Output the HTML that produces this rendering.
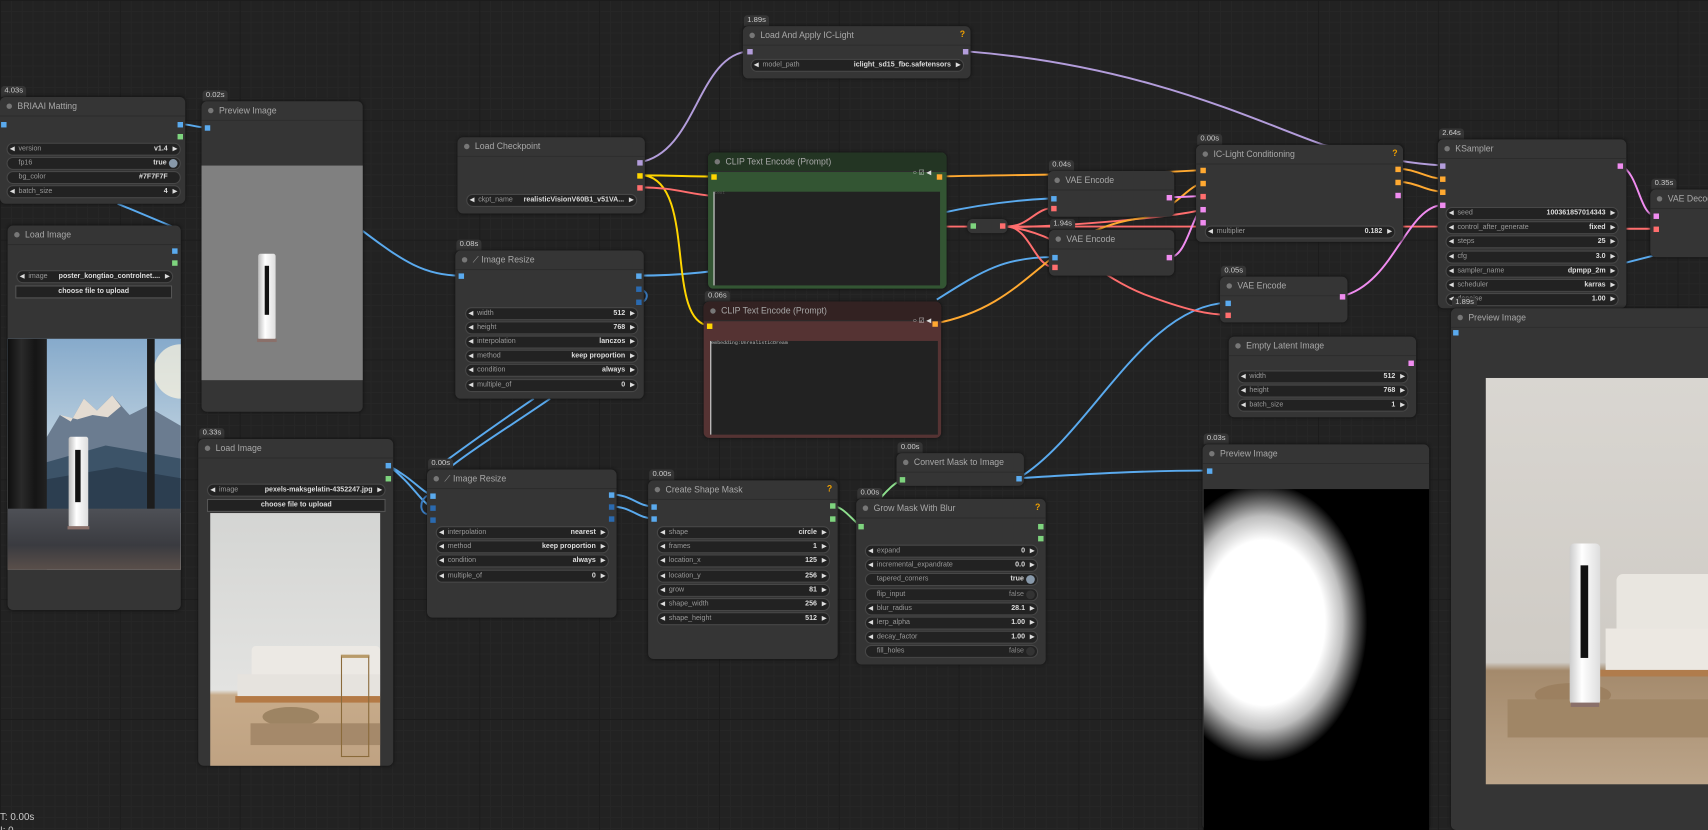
<!DOCTYPE html>
<html><head><meta charset="utf-8">
<style>
html,body{margin:0;padding:0;width:1708px;height:830px;overflow:hidden;background:#222;}
#w{position:absolute;left:0;top:0;width:1568px;height:762px;transform:scale(1.08929);transform-origin:0 0;overflow:hidden;
background-color:#222;
background-image:linear-gradient(#1c1c1c 1px,transparent 1px),linear-gradient(90deg,#1c1c1c 1px,transparent 1px),linear-gradient(#262626 1px,transparent 1px),linear-gradient(90deg,#262626 1px,transparent 1px);
background-size:110px 110px,110px 110px,10px 10px,10px 10px;
font-family:"Liberation Sans",Arial,sans-serif;}
.n{position:absolute;background:#353535;border-radius:5px;box-shadow:0 0 3px #111;}
.t{position:absolute;left:0;right:0;top:0;height:17px;border-bottom:1px solid #2c2c2c;color:#a8a8a8;font-size:8px;line-height:17px;padding-left:16px;white-space:nowrap;overflow:hidden;border-radius:5px 5px 0 0}
.t:before{content:"";position:absolute;left:6px;top:6px;width:5px;height:5px;border-radius:50%;background:#777}
.tm{position:absolute;background:#353535;color:#ccc;font-size:7px;padding:1px 3px;border-radius:3px 3px 0 0;height:8px;line-height:8px}
.wd{position:absolute;height:10px;background:#222;border:1px solid #474747;border-radius:6px;font-size:6.5px;line-height:10px;color:#999;white-space:nowrap;overflow:hidden}
.wd .l{position:absolute;left:10px}
.wd .v{position:absolute;right:11px;color:#ddd;font-weight:bold}
.wd .a1{position:absolute;left:2px;color:#ddd;font-size:6px}
.wd .a2{position:absolute;right:2px;color:#ddd;font-size:6px}
.s{position:absolute;width:5px;height:5px}
.q{position:absolute;color:#f0a000;font-size:8px;font-weight:bold}
svg{position:absolute;left:0;top:0}
.btn{position:absolute;height:10px;background:#222;border:1px solid #555;color:#ddd;font-size:6.5px;line-height:10px;text-align:center;font-weight:bold}
</style></head><body><div id="w">
<svg width="1568" height="762" fill="none" stroke-width="1.8">
<g stroke="#5aaaee">
<path d="M165 114 C175 114 180 117 190 117"/>
<path d="M108 187 L163 210"/>
<path d="M333 212 C370 240 390 253 423 253"/>
<path d="M586 253 C750 253 800 190 967 182"/>
<path d="M860 275 C900 250 920 236 967 236"/>
<path d="M356 427 C380 440 385 450 397 455"/>
<path d="M356 427 C380 445 385 460 397 466"/>
<path d="M505 366 C470 390 430 415 412 430"/>
<path d="M490 366 C455 390 420 415 400 430"/>
<path d="M561 454 C580 454 585 465 600 465"/>
<path d="M561 465 C580 465 585 476 600 476"/>
<path d="M935 439 C1000 435 1050 432 1110 432"/>
<path d="M935 439 C1000 400 1050 280 1127 278"/>
<path d="M1493 241 L1568 222"/>
</g>
<g stroke="#3a7bc0"><path d="M586 265 C600 268 592 280 586 277"/><path d="M392 455 C385 460 385 470 392 472"/></g>
<g stroke="#b39ddb"><path d="M587 149 C640 140 640 50 688 47"/><path d="M886 47 C1050 60 1150 110 1215 133 C1270 145 1290 150 1325 152"/></g>
<g stroke="#ffd500"><path d="M587 161 C620 161 630 162 655 162"/><path d="M592 161 C640 170 610 295 651 299"/></g>
<g stroke="#ff6e6e"><path d="M587 172 C620 172 630 178 655 180"/><path d="M862 208 L892 208"/><path d="M924 208 C945 208 950 191 967 191"/><path d="M924 208 C945 208 950 245 967 245"/><path d="M924 208 L1320 208"/><path d="M924 208 C980 215 1000 250 1050 270 C1090 285 1110 289 1127 289"/><path d="M1493 210 L1520 210"/><path d="M924 208 C950 210 1080 200 1105 192"/></g>
<g stroke="#ffa931"><path d="M862 162 C950 160 1050 160 1105 156"/><path d="M858 297 C950 280 960 210 1050 200 C1080 192 1090 170 1105 168"/><path d="M1284 155 C1300 155 1310 164 1325 164"/><path d="M1284 167 C1300 167 1310 176 1325 176"/></g>
<g stroke="#f08cf0"><path d="M1074 181 C1090 181 1095 180 1105 180"/><path d="M1074 236 C1090 236 1095 192 1105 192"/><path d="M1232 272 C1280 260 1290 190 1325 188"/><path d="M1488 152 C1505 160 1505 198 1520 198"/></g>
<g stroke="#8ee08e"><path d="M828 440 C810 450 800 470 790 483"/><path d="M764 464 C775 466 780 475 790 483"/></g>
</svg>
<div id="nodes"></div>
<div style="position:absolute;left:0;top:745px;color:#ccc;font-size:9px">T: 0.00s</div>
<div style="position:absolute;left:0;top:757px;color:#ccc;font-size:9px">I: 0</div>
</div>
<script>
var H='';
function N(x,y,w,h,title,tm,o){o=o||{};
 if(tm)H+='<div class="tm" style="left:'+(x+1)+'px;top:'+(y-10)+'px">'+tm+'</div>';
 H+='<div class="n" style="left:'+x+'px;top:'+y+'px;width:'+w+'px;height:'+h+'px;'+(o.bg?'background:'+o.bg:'')+'"><div class="t" style="'+(o.tb?'background:'+o.tb:'')+'">'+title+'</div>'+(o.q?'<div class="q" style="right:5px;top:3px">?</div>':'')+'</div>';}
function W(x,y,w,l,v,ar){ar=ar!==false;
 H+='<div class="wd" style="left:'+x+'px;top:'+y+'px;width:'+w+'px">'+(ar?'<span class="a1">◀</span>':'')+'<span class="l">'+l+'</span><span class="v">'+v+'</span>'+(ar?'<span class="a2">▶</span>':'')+'</div>';}
function T(x,y,w,l,v,on){H+='<div class="wd" style="left:'+x+'px;top:'+y+'px;width:'+w+'px"><span class="l">'+l+'</span><span class="v" style="right:12px;'+(on?'':'color:#888;font-weight:normal')+'">'+v+'</span><span style="position:absolute;right:2px;top:1px;width:8px;height:8px;border-radius:50%;background:'+(on?'#8899aa':'#333')+'"></span></div>';}
function S(x,y,c){H+='<div class="s" style="left:'+(x-2.5)+'px;top:'+(y-2.5)+'px;background:'+c+'"></div>';}
function R(html){H+=html;}
var B='#5aaaee',G='#7ed47e',P='#b39ddb',Y='#ffd500',RD='#ff6e6e',O='#ffa931',PK='#f08cf0',DB='#2a6ab0';
N(0,89,170,98,'BRIAAI Matting','4.03s');S(3,114,B);S(165,114,B);S(165,125,G);
W(6,131,158,'version','v1.4');T(6,144,158,'fp16','true',1);W(6,157,158,'bg_color','#7F7F7F',false);W(6,170,158,'batch_size','4');
N(185,93,148,285,'Preview Image','0.02s');S(190,117,B);
R('<div style="position:absolute;left:185px;top:152px;width:148px;height:197px;background:#808080"></div><div style="position:absolute;left:237px;top:233px;width:16px;height:79px;background:linear-gradient(90deg,#bbb,#fff 40%,#ddd);border-radius:2px"></div><div style="position:absolute;left:243px;top:244px;width:4px;height:45px;background:#111"></div><div style="position:absolute;left:236px;top:311px;width:18px;height:3px;background:#8a706a"></div>');
N(7,207,159,353,'Load Image');S(160,230,B);S(160,241,G);
W(15,248,142,'image','poster_kongtiao_controlnet....');R('<div class="btn" style="left:14px;top:262px;width:142px">choose file to upload</div>');
R('<div style="position:absolute;left:7px;top:311px;width:159px;height:212px;overflow:hidden;background:linear-gradient(#86aacb,#b5cbdc 40%,#d8dde0 50%)">'+
'<svg width="159" height="212" style="position:absolute;left:0;top:0"><circle cx="159" cy="30" r="25" fill="#fff6e0" opacity=".7"/><polygon points="30,100 48,70 58,76 70,55 82,66 96,52 112,70 128,62 159,80 159,140 30,140" fill="#6b7c90"/><polygon points="48,70 58,76 70,55 82,66 96,52 104,62 92,72 78,70 64,74" fill="#e4dcd2"/><polygon points="30,115 90,98 159,110 159,160 30,160" fill="#3c5368"/><polygon points="30,130 100,118 159,128 159,160 30,160" fill="#2c3e50"/></svg>'+
'<div style="position:absolute;left:0;top:0;width:36px;height:212px;background:linear-gradient(90deg,#0e0e0e,#2a2a2a,#151515 70%,#222)"></div>'+
'<div style="position:absolute;left:128px;top:0;width:7px;height:160px;background:#1d1d1d"></div>'+
'<div style="position:absolute;left:0;top:156px;width:159px;height:56px;background:linear-gradient(#4e5056,#3a3b40 60%,#5a4f4a)"></div>'+
'<div style="position:absolute;left:56px;top:90px;width:18px;height:83px;background:linear-gradient(90deg,#bbb,#fff 40%,#ddd);border-radius:2px"></div><div style="position:absolute;left:62px;top:102px;width:5px;height:48px;background:#111"></div><div style="position:absolute;left:55px;top:172px;width:20px;height:3px;background:#8a706a"></div></div>');
N(420,126,172,70,'Load Checkpoint');S(587,149,P);S(587,161,Y);S(587,172,RD);W(428,178,155,'ckpt_name','realisticVisionV60B1_v51VA...');
N(418,230,173,136,'⟋ Image Resize','0.08s');S(423,253,B);S(586,253,B);S(586,265,DB);S(586,277,DB);
[['width','512'],['height','768'],['interpolation','lanczos'],['method','keep proportion'],['condition','always'],['multiple_of','0']].forEach(function(a,i){W(427,282+i*13.1,157,a[0],a[1]);});
N(682,24,209,48,'Load And Apply IC-Light','1.89s',{q:1});S(688,47,P);S(886,47,P);W(689,54,194,'model_path','iclight_sd15_fbc.safetensors');
N(650,140,219,125,'CLIP Text Encode (Prompt)','',{bg:'#335533',tb:'#233523'});S(655,162,Y);S(862,162,O);
R('<div style="position:absolute;left:655px;top:176px;width:207px;height:86px;background:#222;border-left:1px solid #ddd;color:#555;font-size:4px;font-family:Liberation Mono">text</div><div style="position:absolute;left:838px;top:155px;color:#ddd;font-size:6px">○ ☑ ◀</div>');
N(646,277,218,125,'CLIP Text Encode (Prompt)','0.06s',{bg:'#553333',tb:'#332222'});S(651,299,Y);S(858,297,O);
R('<div style="position:absolute;left:652px;top:313px;width:208px;height:86px;background:#222;border-left:1px solid #ddd;color:#bbb;font-size:4.5px;font-family:Liberation Mono">embedding:UnrealisticDream</div><div style="position:absolute;left:838px;top:291px;color:#ddd;font-size:6px">○ ☑ ◀</div>');
R('<div class="n" style="left:888px;top:201px;width:37px;height:13px"></div>');S(893,207,G);S(920,207,RD);
N(962,157,116,42,'VAE Encode','0.04s');S(967,182,B);S(967,191,RD);S(1073,181,PK);
N(963,211,115,42,'VAE Encode','1.94s');S(968,236,B);S(968,245,RD);S(1073,236,PK);
N(1120,254,117,42,'VAE Encode','0.05s');S(1127,278,B);S(1127,289,RD);S(1232,272,PK);
N(1098,133,190,89,'IC-Light Conditioning','0.00s',{q:1});S(1104,156,O);S(1104,168,O);S(1104,180,RD);S(1104,192,PK);S(1104,204,PK);S(1283,155,O);S(1283,167,O);S(1283,179,PK);
W(1106,207,173,'multiplier','0.182');
N(1320,128,173,155,'KSampler','2.64s');S(1324,152,P);S(1324,164,O);S(1324,176,O);S(1324,188,PK);S(1487,152,PK);
[['seed','100361857014343'],['control_after_generate','fixed'],['steps','25'],['cfg','3.0'],['sampler_name','dpmpp_2m'],['scheduler','karras'],['denoise','1.00']].forEach(function(a,i){W(1327,190+i*13.2,157,a[0],a[1]);});
N(1515,174,60,62,'VAE Decode','0.35s');S(1520,198,PK);S(1520,210,RD);
N(1332,283,240,479,'Preview Image','1.89s');S(1336,305,B);
R('<div style="position:absolute;left:1364px;top:347px;width:204px;height:373px;overflow:hidden;background:linear-gradient(#d9d6d1,#cfcbc5 70%,#a48a6c 72%,#bca58a)">'+
'<div style="position:absolute;left:120px;top:180px;width:90px;height:60px;background:#e9e6e0;border-radius:6px"></div><div style="position:absolute;left:110px;top:230px;width:100px;height:40px;background:#ece8e2"></div><div style="position:absolute;left:105px;top:268px;width:105px;height:6px;background:#b07c4c"></div>'+
'<div style="position:absolute;left:45px;top:280px;width:70px;height:22px;border-radius:50%;background:#9c8060"></div><div style="position:absolute;left:20px;top:295px;width:184px;height:35px;background:#a08666"></div>'+
'<div style="position:absolute;left:77px;top:152px;width:28px;height:148px;background:linear-gradient(90deg,#ccc,#fff 40%,#ddd);border-radius:4px"></div><div style="position:absolute;left:87px;top:172px;width:7px;height:85px;background:#111"></div><div style="position:absolute;left:78px;top:298px;width:26px;height:4px;background:#8a706a"></div></div>');
N(1128,309,172,74,'Empty Latent Image');S(1295,333,PK);W(1136,340,155,'width','512');W(1136,353,155,'height','768');W(1136,366,155,'batch_size','1');
N(1104,408,208,354,'Preview Image','0.03s');S(1110,432,B);
R('<div style="position:absolute;left:1105px;top:449px;width:207px;height:313px;overflow:hidden;background:#000"><div style="position:absolute;left:-40px;top:-5px;width:190px;height:255px;border-radius:50%;background:radial-gradient(ellipse at center,#fff 42%,rgba(255,255,255,.75) 54%,rgba(255,255,255,0) 71%)"></div></div>');
N(823,416,117,30,'Convert Mask to Image','0.00s');S(828,440,G);S(935,439,B);
N(786,458,174,152,'Grow Mask With Blur','0.00s',{q:1});S(790,483,G);S(955,483,G);S(955,494,G);
W(794,500,157,'expand','0');W(794,513,157,'incremental_expandrate','0.0');T(794,526,157,'tapered_corners','true',1);T(794,540,157,'flip_input','false',0);W(794,553,157,'blur_radius','28.1');W(794,566,157,'lerp_alpha','1.00');W(794,579,157,'decay_factor','1.00');T(794,592,157,'fill_holes','false',0);
N(595,441,174,164,'Create Shape Mask','0.00s',{q:1});S(600,465,B);S(600,476,B);S(764,464,G);S(764,476,G);
[['shape','circle'],['frames','1'],['location_x','125'],['location_y','256'],['grow','81'],['shape_width','256'],['shape_height','512']].forEach(function(a,i){W(603,483+i*13.2,157,a[0],a[1]);});
N(392,431,174,136,'⟋ Image Resize','0.00s');S(397,455,B);S(397,466,DB);S(397,477,DB);S(561,454,B);S(561,465,DB);S(561,476,DB);
[['interpolation','nearest'],['method','keep proportion'],['condition','always'],['multiple_of','0']].forEach(function(a,i){W(400,483+i*13.2,157,a[0],a[1]);});
N(182,403,179,300,'Load Image','0.33s');S(356,427,B);S(356,439,G);
W(190,444,162,'image','pexels-maksgelatin-4352247.jpg');R('<div class="btn" style="left:190px;top:458px;width:162px">choose file to upload</div>');
R('<div style="position:absolute;left:193px;top:471px;width:156px;height:232px;overflow:hidden;background:linear-gradient(#d4d5d3,#e3e3e1 70%,#c7ab8a 72%,#bfa282)">'+
'<div style="position:absolute;left:38px;top:122px;width:118px;height:30px;background:#ece9e4;border-radius:4px"></div><div style="position:absolute;left:25px;top:148px;width:131px;height:22px;background:#e6e3de"></div><div style="position:absolute;left:23px;top:168px;width:133px;height:6px;background:#b47a46"></div>'+
'<div style="position:absolute;left:48px;top:178px;width:52px;height:18px;border-radius:50%;background:#9d8463"></div><div style="position:absolute;left:37px;top:193px;width:119px;height:20px;background:#a5896a"></div>'+
'<div style="position:absolute;left:120px;top:130px;width:24px;height:90px;border:1px solid #8a6a3a;border-top:3px solid #b89b6a"></div></div>');
document.getElementById('nodes').innerHTML=H;
</script>
</body></html>
